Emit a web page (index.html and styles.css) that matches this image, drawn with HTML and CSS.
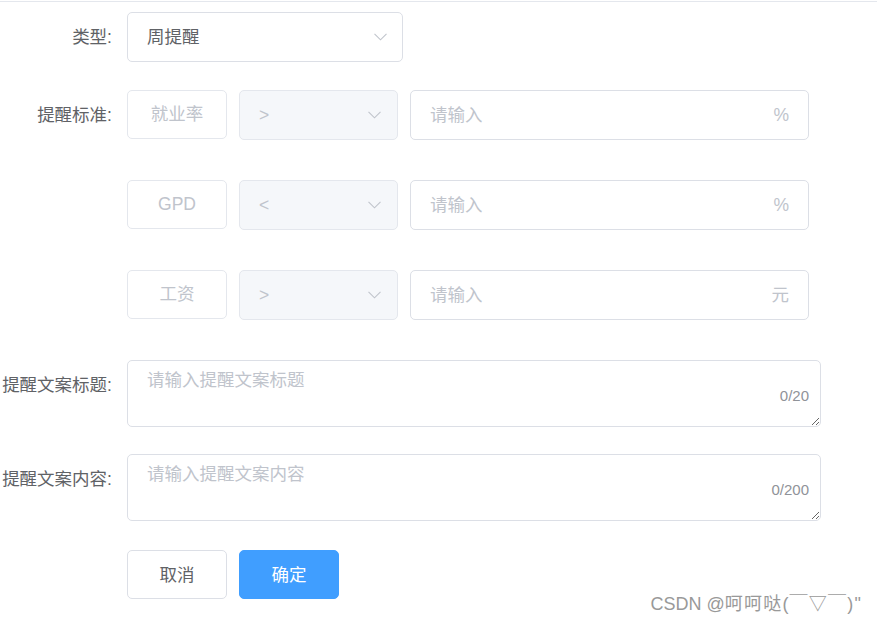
FILE: index.html
```html
<!DOCTYPE html>
<html lang="zh-CN">
<head>
<meta charset="utf-8">
<title>提醒设置</title>
<link rel="stylesheet" href="styles.css">
</head>
<body>
<div class="page">
  <form class="form">
    <div class="item item-type">
      <label class="label">类型:</label>
      <div class="content">
        <div class="select select-type">
          <span class="select-text">周提醒</span>
          <svg class="arrow" width="13" height="8" viewBox="0 0 13 8"><polyline points="0.5,0.8 6.5,6.8 12.5,0.8" fill="none" stroke="#c0c4cc" stroke-width="1.1"/></svg>
        </div>
      </div>
    </div>

    <div class="item item-std">
      <label class="label">提醒标准:</label>
      <div class="content rows">
        <div class="row">
          <div class="tag">就业率</div>
          <div class="select select-op disabled">
            <span class="select-text">&gt;</span>
            <svg class="arrow" width="13" height="8" viewBox="0 0 13 8"><polyline points="0.5,0.8 6.5,6.8 12.5,0.8" fill="none" stroke="#c0c4cc" stroke-width="1.1"/></svg>
          </div>
          <div class="input">
            <input type="text" placeholder="请输入">
            <span class="suffix">%</span>
          </div>
        </div>
        <div class="row">
          <div class="tag">GPD</div>
          <div class="select select-op disabled">
            <span class="select-text">&lt;</span>
            <svg class="arrow" width="13" height="8" viewBox="0 0 13 8"><polyline points="0.5,0.8 6.5,6.8 12.5,0.8" fill="none" stroke="#c0c4cc" stroke-width="1.1"/></svg>
          </div>
          <div class="input">
            <input type="text" placeholder="请输入">
            <span class="suffix">%</span>
          </div>
        </div>
        <div class="row">
          <div class="tag">工资</div>
          <div class="select select-op disabled">
            <span class="select-text">&gt;</span>
            <svg class="arrow" width="13" height="8" viewBox="0 0 13 8"><polyline points="0.5,0.8 6.5,6.8 12.5,0.8" fill="none" stroke="#c0c4cc" stroke-width="1.1"/></svg>
          </div>
          <div class="input">
            <input type="text" placeholder="请输入">
            <span class="suffix">元</span>
          </div>
        </div>
      </div>
    </div>

    <div class="item item-title">
      <label class="label">提醒文案标题:</label>
      <div class="content">
        <div class="textarea-wrap">
          <textarea rows="2" placeholder="请输入提醒文案标题"></textarea>
          <span class="count">0/20</span>
        </div>
      </div>
    </div>

    <div class="item item-body">
      <label class="label">提醒文案内容:</label>
      <div class="content">
        <div class="textarea-wrap">
          <textarea rows="2" placeholder="请输入提醒文案内容"></textarea>
          <span class="count">0/200</span>
        </div>
      </div>
    </div>

    <div class="item item-btns">
      <div class="label"></div>
      <div class="content btns">
        <button type="button" class="btn">取消</button>
        <button type="button" class="btn btn-primary">确定</button>
      </div>
    </div>
  </form>
  <div class="watermark">CSDN @<span class="wm-cjk">呵呵哒(￣▽￣)"</span></div>
</div>
</body>
</html>
```

FILE: styles.css
```css
* {
  box-sizing: border-box;
}

html, body {
  margin: 0;
  padding: 0;
  background: #fff;
}

body {
  font-family: "Liberation Sans", "Noto Sans CJK SC", sans-serif;
  font-size: 17.5px;
  color: #606266;
}

.page {
  position: relative;
  width: 877px;
  height: 622px;
  margin-top: 1px;
  border-top: 1px solid #e4e7ed;
  overflow: hidden;
}

.form {
  padding-top: 10px;
}

.item {
  display: flex;
  align-items: flex-start;
}

.item-type { margin-bottom: 28px; }
.item-std { margin-bottom: 40px; }
.item-title { margin-bottom: 27px; }
.item-body { margin-bottom: 29px; }

.label {
  flex: 0 0 127px;
  width: 127px;
  padding-right: 15px;
  text-align: right;
  line-height: 50px;
  height: 50px;
  color: #606266;
  white-space: nowrap;
}

.content {
  display: flex;
}

.rows {
  flex-direction: column;
  gap: 40px;
}

.row {
  display: flex;
  gap: 12px;
}

.select {
  display: flex;
  align-items: center;
  justify-content: space-between;
  height: 50px;
  padding: 0 15px 0 19px;
  border: 1px solid #dcdfe6;
  border-radius: 5px;
  background: #fff;
  color: #606266;
}

.select-type {
  width: 276px;
}

.select-op {
  width: 159px;
  padding-right: 16px;
}

.select.disabled {
  background: #f5f7fa;
  border-color: #e4e7ed;
  color: #c0c4cc;
}

.select-text {
  line-height: 48px;
}

.arrow {
  display: block;
}

.tag {
  width: 100px;
  height: 49px;
  border: 1px solid #e4e7ed;
  border-radius: 5px;
  background: #fff;
  color: #c0c4cc;
  text-align: center;
  line-height: 47px;
}

.input {
  display: flex;
  align-items: center;
  width: 399px;
  height: 50px;
  padding: 0 19px 0 19px;
  border: 1px solid #dcdfe6;
  border-radius: 5px;
  background: #fff;
}

.input input {
  flex: 1;
  min-width: 0;
  border: 0;
  outline: 0;
  padding: 0;
  height: 48px;
  font: inherit;
  color: #606266;
  background: transparent;
}

.input input::placeholder,
textarea::placeholder {
  color: #c0c4cc;
  opacity: 1;
}

.suffix {
  color: #c0c4cc;
  line-height: 48px;
}

.textarea-wrap {
  position: relative;
  width: 694px;
}

textarea {
  display: block;
  width: 694px;
  height: 67px;
  padding: 6px 19px;
  border: 1px solid #dcdfe6;
  border-radius: 5px;
  font: inherit;
  font-size: 17.5px;
  line-height: 1.5;
  color: #606266;
  resize: vertical;
  outline: 0;
  background: #fff;
}

.count {
  position: absolute;
  right: 12px;
  bottom: 6px;
  line-height: 50px;
  font-size: 15px;
  color: #909399;
  background: #fff;
}

.btns {
  gap: 12px;
}

.btn {
  width: 100px;
  height: 49px;
  padding: 0 0 3px;
  border: 1px solid #dcdfe6;
  border-radius: 5px;
  background: #fff;
  color: #606266;
  font: inherit;
  font-size: 17.5px;
  cursor: pointer;
}

.btn-primary {
  background: #409eff;
  border-color: #409eff;
  color: #fff;
}

.watermark {
  position: absolute;
  right: 15px;
  top: 589px;
  line-height: 26px;
  font-size: 18px;
  color: #999;
  text-shadow: 0 0 1px #fff;
  white-space: nowrap;
}

.wm-cjk {
  letter-spacing: 1.2px;
}
```
